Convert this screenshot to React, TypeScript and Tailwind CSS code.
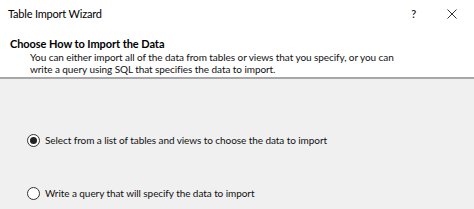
export default function App() {
  return (
    <div className="w-[474px] h-[209px] flex flex-col bg-white text-black overflow-hidden font-['Lato','Liberation_Sans',sans-serif] text-[10px] tracking-[-0.07px]">
      <div className="h-[28px] shrink-0 flex items-center justify-between pl-[8px] pr-[17px] text-[11px] tracking-[-0.2px]">
        <span>Table Import Wizard</span>
        <div className="flex items-center gap-[31px]">
          <span className="text-[11px] font-semibold text-[#222]">?</span>
          <svg width="10" height="10" viewBox="0 0 10 10" stroke="#333" strokeWidth="1">
            <path d="M0.5 0.5 L9.5 9.5 M9.5 0.5 L0.5 9.5" />
          </svg>
        </div>
      </div>
      <div className="shrink-0 pt-[8px] pl-[10px] pb-[2px] border-b-2 border-[#a8a8a8]">
        <div className="text-[11px] font-bold leading-[15px]">Choose How to Import the Data</div>
        <div className="pl-[20px] leading-[12px] text-[#111]">
          <div>You can either import all of the data from tables or views that you specify, or you can</div>
          <div>write a query using SQL that specifies the data to import.</div>
        </div>
      </div>
      <div className="flex-1 bg-[#f0f0f0] pl-[27px] pt-[53px] text-[#111]">
        <label className="flex items-center gap-[5px] h-[16px]">
          <span className="w-[13px] h-[13px] rounded-full border border-[#333] bg-white flex items-center justify-center">
            <span className="w-[7px] h-[7px] rounded-full bg-[#222]" />
          </span>
          <span>Select from a list of tables and views to choose the data to import</span>
        </label>
        <label className="flex items-center gap-[5px] h-[16px] mt-[37px]">
          <span className="w-[13px] h-[13px] rounded-full border border-[#333] bg-white" />
          <span>Write a query that will specify the data to import</span>
        </label>
      </div>
    </div>
  );
}
